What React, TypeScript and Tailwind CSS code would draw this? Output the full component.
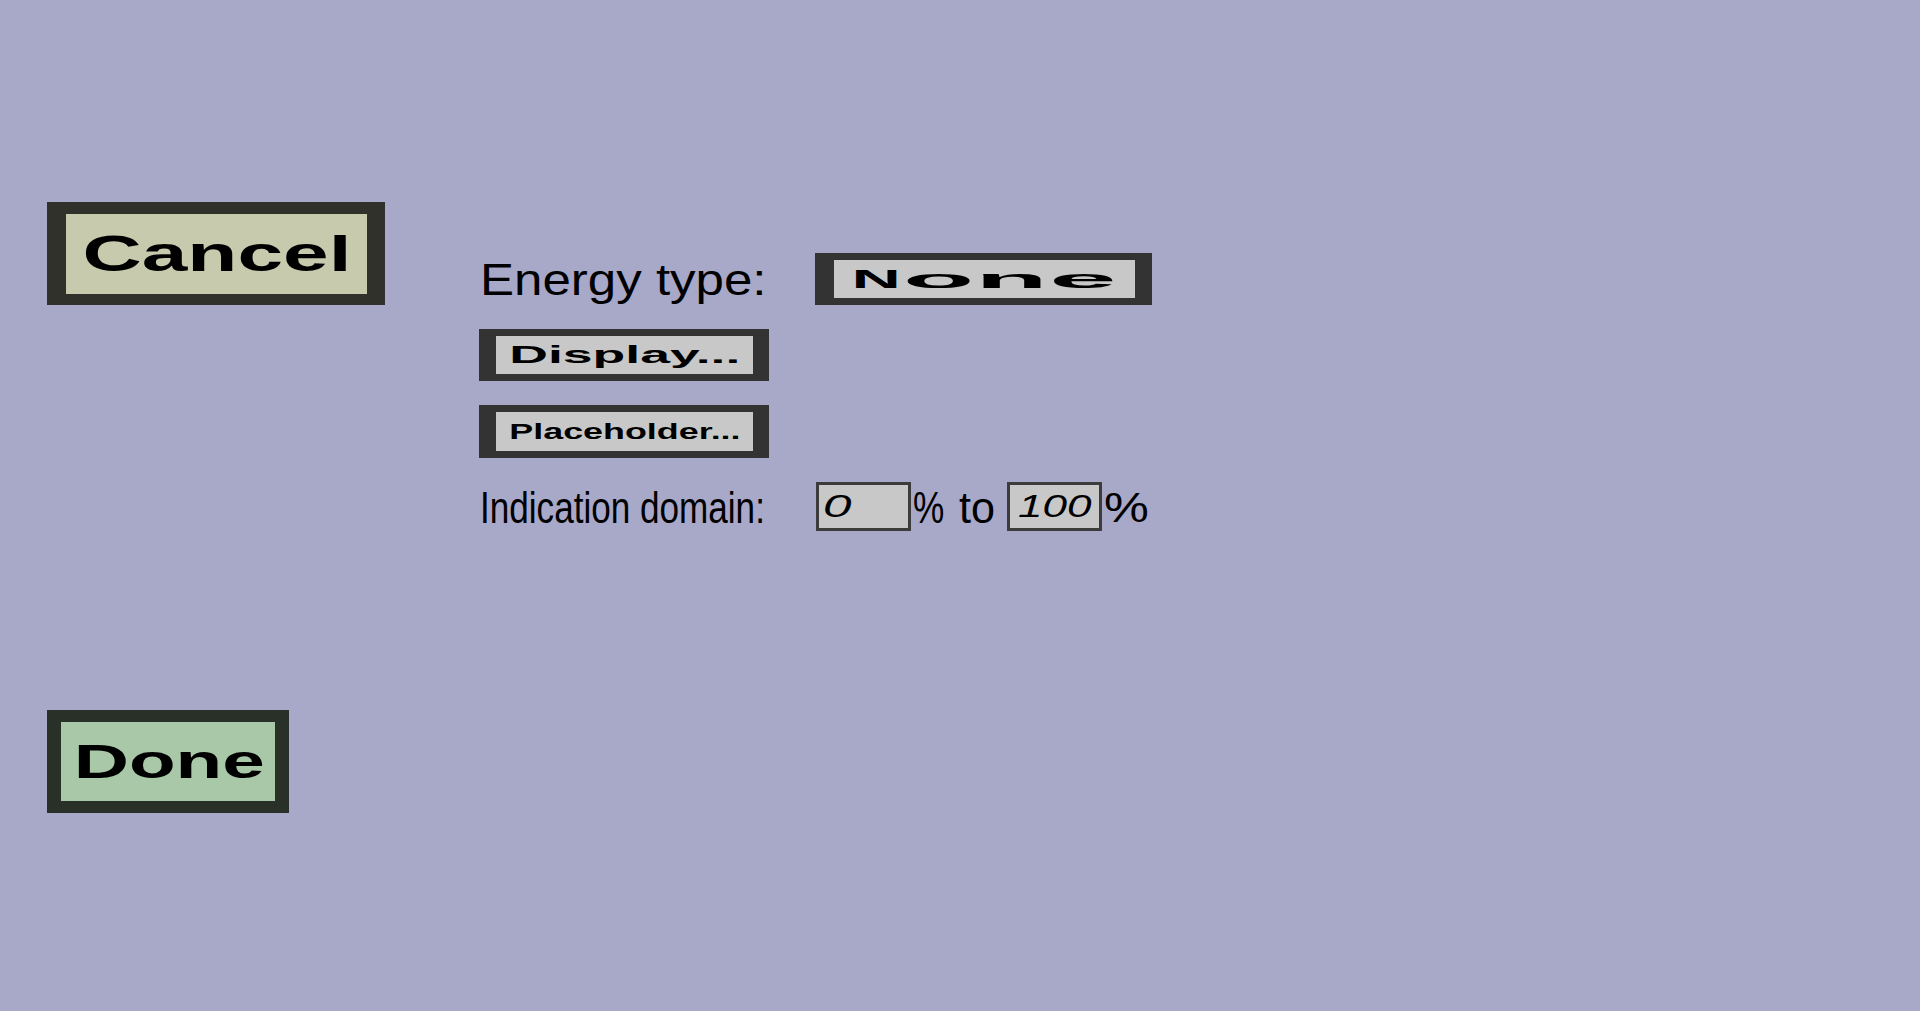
import React from "react";

function Letter({ w, s, ch }: { w: string; s: string; ch: string }) {
  return (
    <span className={`flex justify-center ${w}`}>
      <span className={`inline-block ${s}`}>{ch}</span>
    </span>
  );
}

export default function App() {
  return (
    <div className="w-full h-[1011px] bg-[#a8a8c8] flex overflow-hidden font-['Liberation_Sans',Arial,sans-serif] text-black whitespace-nowrap">
      {/* Left column: Cancel / Done */}
      <div className="w-[479px] shrink-0 flex flex-col items-start pl-[47px] pt-[202px]">
        <button
          type="button"
          className="w-[338px] h-[103px] border-[#31312b] border-l-[19px] border-t-[12px] border-r-[18px] border-b-[11px] bg-[#c8caae] flex items-center justify-center"
        >
          <span className="inline-block font-bold text-[50px] leading-none scale-x-[1.64]">Cancel</span>
        </button>
        <button
          type="button"
          className="mt-[405px] w-[242px] h-[103px] border-[#283028] border-x-[14px] border-y-[12px] bg-[#a8c8a8] flex items-center justify-center"
        >
          <span className="inline-block font-bold text-[49px] leading-none scale-x-[1.56] ml-[2px]">Done</span>
        </button>
      </div>

      {/* Form column */}
      <div className="flex flex-col gap-6 pt-[253px]">
        {/* Energy type */}
        <div className="flex items-center h-[52px]">
          <div className="w-[336px] shrink-0 pl-[1px] pt-[2px]">
            <span className="inline-block text-[44px] leading-none origin-left scale-x-[1.16]">Energy type:</span>
          </div>
          <button
            type="button"
            className="w-[337px] h-[52px] border-[#333333] border-l-[19px] border-r-[17px] border-y-[7px] bg-[#c8c8c8] flex items-center pl-[16px] font-bold text-[25px] leading-none"
          >
            <Letter w="w-[52px]" s="scale-x-[2.73]" ch="N" />
            <Letter w="w-[74px]" s="scale-x-[4.66]" ch="o" />
            <Letter w="w-[72px]" s="scale-x-[4.75]" ch="n" />
            <Letter w="w-[70px]" s="scale-x-[4.84]" ch="e" />
          </button>
        </div>

        {/* Display... */}
        <button
          type="button"
          className="w-[290px] h-[52px] border-[#333333] border-l-[17px] border-r-[16px] border-y-[7px] bg-[#c8c8c8] flex items-center justify-center"
        >
          <span className="inline-block font-bold text-[24px] leading-none scale-x-[2.23]">Display...</span>
        </button>

        {/* Placeholder... */}
        <button
          type="button"
          className="w-[290px] h-[53px] border-[#333333] border-l-[17px] border-r-[16px] border-y-[7px] bg-[#c8c8c8] flex items-center justify-center"
        >
          <span className="inline-block font-bold text-[22px] leading-none scale-x-[1.63]">Placeholder...</span>
        </button>

        {/* Indication domain */}
        <div className="flex items-center h-[49px]">
          <div className="w-[337px] shrink-0 pl-[1px] pt-[2px]">
            <span className="inline-block text-[45px] leading-none origin-left scale-x-[0.78]">Indication domain:</span>
          </div>
          <div className="w-[95px] h-[49px] shrink-0 border-[3px] border-[#3c3c3c] bg-[#c8c8c8] flex items-center pl-[4px]">
            <span className="inline-block italic text-[31px] leading-none origin-left scale-x-[1.65]">0</span>
          </div>
          <div className="w-[48px] shrink-0 pl-[2px] pt-[2px]">
            <span className="inline-block text-[44px] leading-none origin-left scale-x-[0.8]">%</span>
          </div>
          <div className="w-[48px] shrink-0 pt-[2px]">
            <span className="inline-block text-[44px] leading-none origin-left scale-x-[0.98]">to</span>
          </div>
          <div className="w-[95px] h-[49px] shrink-0 border-[3px] border-[#3c3c3c] bg-[#c8c8c8] flex items-center pl-[8px]">
            <span className="inline-block italic text-[31px] leading-none origin-left scale-x-[1.42]">100</span>
          </div>
          <div className="pl-[2px] pt-[2px]">
            <span className="inline-block text-[42px] leading-none origin-left scale-x-[1.2]">%</span>
          </div>
        </div>
      </div>
    </div>
  );
}
